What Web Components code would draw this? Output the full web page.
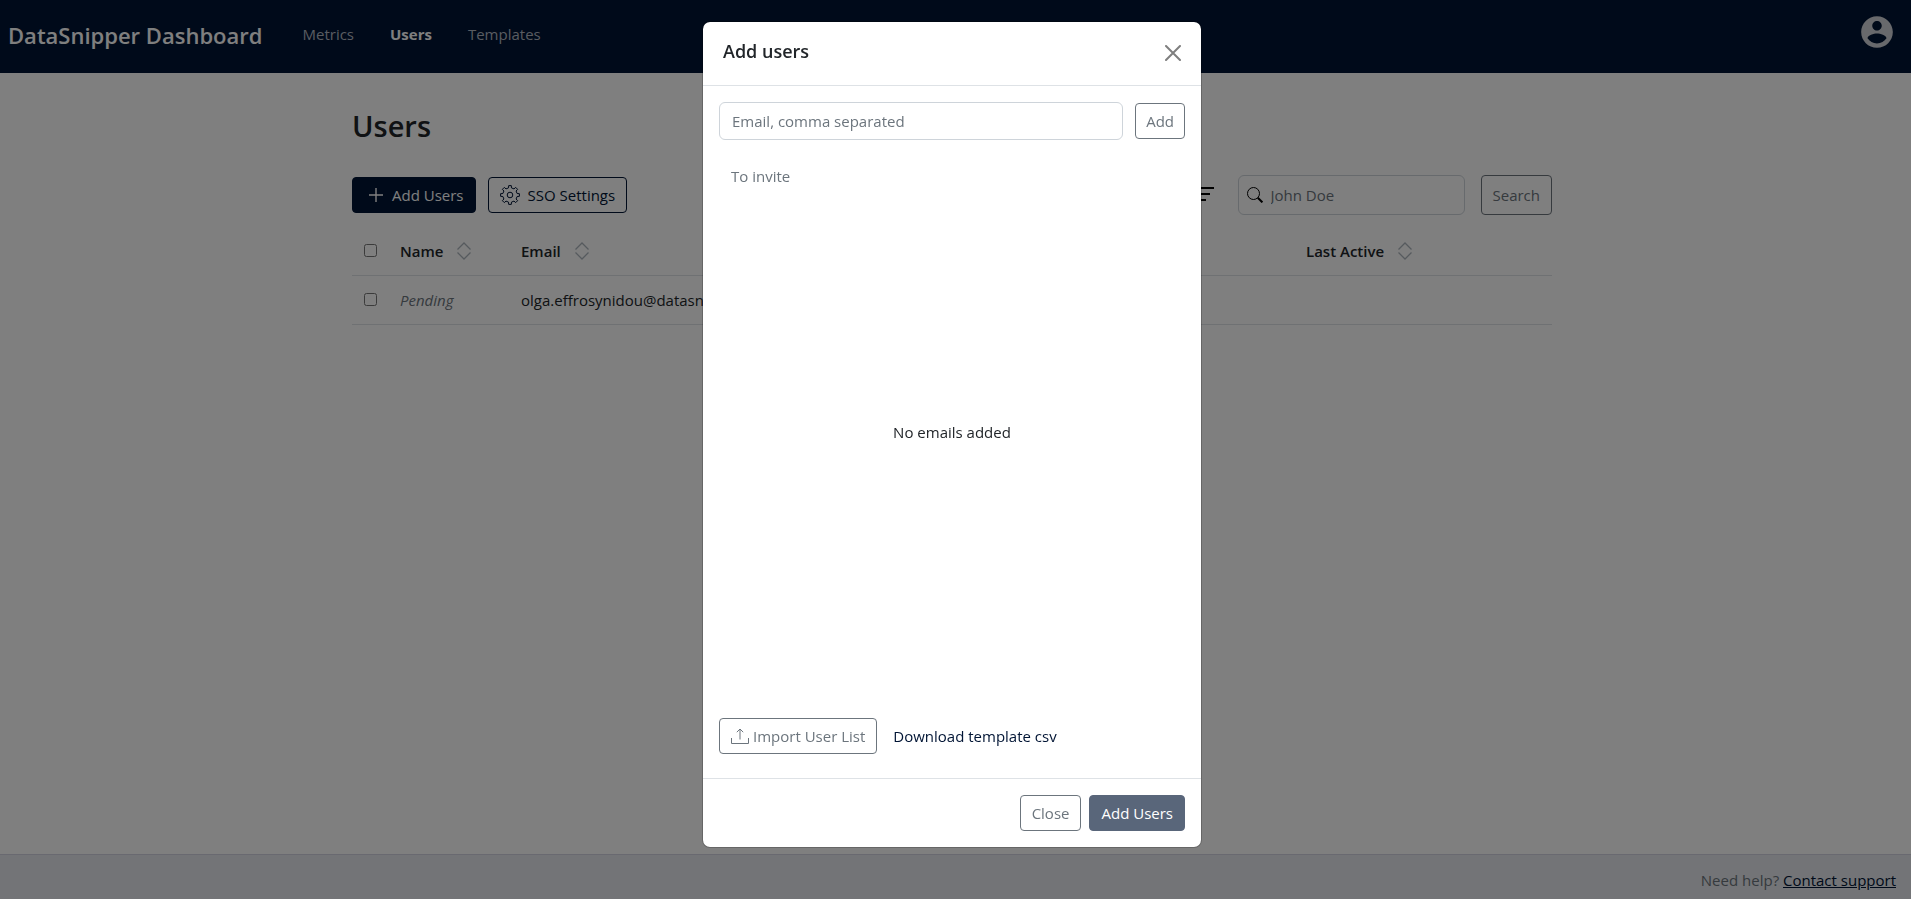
<!DOCTYPE html>
<html lang="en">
<head>
<meta charset="utf-8">
<title>DataSnipper Dashboard</title>
<style>
    html, body {
        height: 100%;
        margin: 0;
    }
    body {
        --navy: #001434;
        --muted: #6c757d;
        --line: #dee2e6;
        --gutter: 7px;
        font-family: "Open Sans", "Noto Sans", sans-serif;
        font-size: 15px;
        line-height: 24px;
        color: #212529;
        background: #fff;
    }
</style>
</head>
<body>

<app-shell>
    <app-header slot="header" brand="DataSnipper Dashboard">
        <nav-link href="#metrics">Metrics</nav-link>
        <nav-link href="#users" active>Users</nav-link>
        <nav-link href="#templates">Templates</nav-link>
    </app-header>
    <users-page>
        <span slot="title">Users</span>
    </users-page>
    <app-footer slot="footer">Need help?</app-footer>
</app-shell>
<add-users-dialog></add-users-dialog>

<script>
const ICONS = {
    account: '<svg viewBox="0 0 24 24"><path d="M12 2C6.480 2 2 6.480 2 12s4.480 10 10 10 10-4.480 10-10S17.520 2 12 2zm0 3c1.660 0 3 1.340 3 3s-1.340 3-3 3-3-1.340-3-3 1.340-3 3-3zm0 14.200c-2.500 0-4.710-1.280-6-3.220.03-1.990 4-3.080 6-3.080 1.990 0 5.970 1.090 6 3.080-1.290 1.940-3.500 3.220-6 3.220z"/></svg>',
    plus: '<svg viewBox="0 0 24 24"><path d="M11.300 5h1.400v6.300H19v1.400h-6.300V19h-1.400v-6.300H5v-1.400h6.300z"/></svg>',
    gear: '<svg viewBox="0 0 20 20" fill="none" stroke="currentColor" stroke-width="1"><circle cx="10" cy="10" r="2.800"/><path d="M8.500 2.900 8.700.600h2.600l.200 2.300 2.500 1 1.700-1.500 1.900 1.900-1.500 1.700 1 2.500 2.300.200v2.600l-2.300.200-1 2.500 1.500 1.700-1.900 1.900-1.700-1.500-2.500 1-.200 2.300H8.700l-.200-2.300-2.500-1-1.700 1.500-1.900-1.900L3.900 14l-1-2.500-2.300-.200V8.700l2.300-.200 1-2.500-1.500-1.700 1.900-1.900L6 3.900z" stroke-linejoin="round"/></svg>',
    sort: '<svg viewBox="0 0 14 18" fill="none" stroke="currentColor" stroke-width="1.300"><path d="M.500 7.500 7 1l6.500 6.500M.500 10.500 7 17l6.500-6.500"/></svg>',
    filter: '<svg viewBox="0 0 24 24"><path d="M0 5h24v2H0zM4 11h16v2H4zM8 17h8v2H8z"/></svg>',
    search: '<svg viewBox="0 0 16 16" fill="none" stroke="currentColor"><circle cx="6.500" cy="6.500" r="6"/><path d="m10.800 10.800 4.600 4.600" stroke-width="2"/></svg>',
    upload: '<svg viewBox="0 0 18 16" fill="none" stroke="currentColor"><path d="M.500 10v5.500h17V10M9 11.500V1M5.800 4.200 9 1l3.200 3.200"/></svg>',
    close: '<svg viewBox="0 0 16 16" fill="none" stroke="currentColor" stroke-width="2" stroke-linecap="round"><path d="m1 1 14 14M15 1 1 15"/></svg>'
};

/**
 * Base class: renders the subclass template into an open shadow root.
 * @extends HTMLElement
 */
class BaseElement extends HTMLElement
{
    connectedCallback()
    {
        if(this.shadowRoot) return;

        let template = document.createElement('template');
        template.innerHTML = `<style>*{box-sizing:border-box}</style>${this.render()}`;
        this.attachShadow({mode: 'open'}).appendChild(template.content.cloneNode(true));
    }

    render()
    {
        return '<slot></slot>';
    }
}


/** <ui-icon name="..." size="..."> */
class UiIcon extends BaseElement
{
    render()
    {
        let size = this.getAttribute('size') || 16;
        return `
            <style>
                :host { display: inline-flex; flex: none; }
                svg { display: block; width: ${size}px; height: ${size}px; fill: currentColor; }
                svg[fill="none"] { fill: none; }
            </style>
            ${ICONS[this.getAttribute('name')]}
        `;
    }
}
customElements.define('ui-icon', UiIcon);


/** Button. variant: primary | outline */
class UiButton extends BaseElement
{
    render()
    {
        return `
            <style>
                :host { display: inline-flex; flex: none; }
                button {
                    display: flex;
                    align-items: center;
                    gap: 8px;
                    min-height: 36px;
                    padding: 0 11px;
                    border: 1px solid var(--muted);
                    border-radius: 4px;
                    background: transparent;
                    color: var(--muted);
                    font: inherit;
                    white-space: nowrap;
                }
                :host([variant="primary"]) button {
                    background: var(--navy);
                    border-color: var(--navy);
                    color: #fff;
                }
                :host([variant="outline"]) button {
                    border-color: var(--navy);
                    color: var(--navy);
                }
                :host([tight]) button { gap: 4px; }
                :host([narrow]) button { padding: 0 10px; }
                :host([tall]) button { min-height: 40px; }
                button:disabled { opacity: .65; }
            </style>
            <button type="button" ${this.hasAttribute('disabled') ? 'disabled' : ''}><slot></slot></button>
        `;
    }
}
customElements.define('ui-button', UiButton);


class NavLink extends BaseElement
{
    render()
    {
        return `
            <style>
                :host { display: block; }
                a { color: #b2b8c2; text-decoration: none; }
                :host([active]) a { color: #fff; font-weight: 700; }
            </style>
            <a href="${this.getAttribute('href')}"><slot></slot></a>
        `;
    }
}
customElements.define('nav-link', NavLink);


class AppHeader extends BaseElement
{
    render()
    {
        return `
            <style>
                :host {
                    display: flex;
                    align-items: center;
                    height: 73px;
                    padding: 0 calc(var(--gutter) + 8px) 6px 8px;
                    box-sizing: border-box;
                    background: var(--navy);
                    color: #fff;
                }
                .brand {
                    padding-top: 2px;
                    font-size: 22px;
                    line-height: 32px;
                    font-weight: 600;
                    color: inherit;
                    text-decoration: none;
                }
                nav { display: flex; gap: 36px; margin-left: 40px; }
                button {
                    margin-left: auto;
                    padding: 0;
                    border: 0;
                    background: none;
                    color: #d0d3d8;
                }
            </style>
            <a class="brand" href="#home">${this.getAttribute('brand')}</a>
            <nav><slot></slot></nav>
            <button type="button" aria-label="Account"><ui-icon name="account" size="38"></ui-icon></button>
        `;
    }
}
customElements.define('app-header', AppHeader);


class AppFooter extends BaseElement
{
    render()
    {
        return `
            <style>
                :host {
                    display: block;
                    padding: 13px calc(var(--gutter) + 8px) 7px 8px;
                    border-top: 1px solid #d3d3e0;
                    background: #e6e9ee;
                    color: var(--muted);
                    text-align: right;
                }
                a { color: var(--navy); }
            </style>
            <slot></slot> <a href="#support">Contact support</a>
        `;
    }
}
customElements.define('app-footer', AppFooter);


class AppShell extends BaseElement
{
    render()
    {
        return `
            <style>
                :host { display: flex; flex-direction: column; min-height: 100vh; }
                main { flex: 1; padding: 32px var(--gutter) 0 0; }
            </style>
            <slot name="header"></slot>
            <main><slot></slot></main>
            <slot name="footer"></slot>
        `;
    }
}
customElements.define('app-shell', AppShell);


class SearchField extends BaseElement
{
    render()
    {
        return `
            <style>
                :host { display: flex; }
                label {
                    display: flex;
                    align-items: center;
                    gap: 8px;
                    width: 227px;
                    height: 40px;
                    padding: 0 8px;
                    border: 1px solid #ced4da;
                    border-radius: 6px;
                    color: #000;
                }
                input {
                    flex: 1;
                    min-width: 0;
                    padding: 0;
                    border: 0;
                    outline: 0;
                    background: none;
                    font: inherit;
                }
                input::placeholder { color: var(--muted); opacity: 1; }
            </style>
            <label><ui-icon name="search"></ui-icon><input type="text" aria-label="Search users" placeholder="John Doe"></label>
        `;
    }
}
customElements.define('search-field', SearchField);


class UsersTable extends BaseElement
{
    render()
    {
        return `
            <style>
                :host { display: block; }
                table { width: 100%; border-collapse: collapse; table-layout: fixed; }
                th, td {
                    height: 49px;
                    padding: 0;
                    border-bottom: 1px solid var(--line);
                    text-align: left;
                    font-weight: 400;
                    white-space: nowrap;
                }
                th { height: 48px; font-weight: 600; }
                th button {
                    display: inline-flex;
                    align-items: center;
                    gap: 12px;
                    padding: 0;
                    border: 0;
                    background: none;
                    color: inherit;
                    font: inherit;
                }
                th ui-icon { color: #adb5bd; }
                input { display: block; width: 13px; height: 13px; margin: 0 0 0 12px; }
                .check { width: 48px; }
                .name { width: 121px; }
                .active { width: 246px; }
                .pending { color: var(--muted); font-style: italic; }
            </style>
            <table>
                <thead>
                    <tr>
                        <th class="check"><input type="checkbox" aria-label="Select all"></th>
                        <th class="name"><button type="button">Name <ui-icon name="sort" size="18"></ui-icon></button></th>
                        <th><button type="button">Email <ui-icon name="sort" size="18"></ui-icon></button></th>
                        <th class="active"><button type="button">Last Active <ui-icon name="sort" size="18"></ui-icon></button></th>
                    </tr>
                </thead>
                <tbody>
                    <tr>
                        <td><input type="checkbox" aria-label="Select user"></td>
                        <td class="pending">Pending</td>
                        <td>olga.effrosynidou@datasnipper.com</td>
                        <td></td>
                    </tr>
                </tbody>
            </table>
        `;
    }
}
customElements.define('users-table', UsersTable);


class UsersPage extends BaseElement
{
    render()
    {
        return `
            <style>
                :host { display: block; max-width: 1200px; margin: 0 auto; }
                h1 { margin: 0 0 28px; font-size: 29px; line-height: 42px; font-weight: 600; }
                .toolbar { display: flex; align-items: center; gap: 12px; margin-bottom: 12px; }
                .find { display: flex; align-items: center; gap: 16px; margin-left: auto; }
                .filter { padding: 0; margin-right: 8px; border: 0; background: none; color: #000; }
            </style>
            <h1><slot name="title"></slot></h1>
            <div class="toolbar">
                <ui-button variant="primary" tight><ui-icon name="plus" size="24"></ui-icon>Add Users</ui-button>
                <ui-button variant="outline"><ui-icon name="gear" size="20"></ui-icon>SSO Settings</ui-button>
                <div class="find">
                    <button class="filter" type="button" aria-label="Filter"><ui-icon name="filter" size="24"></ui-icon></button>
                    <search-field></search-field>
                    <ui-button tall>Search</ui-button>
                </div>
            </div>
            <users-table></users-table>
        `;
    }
}
customElements.define('users-page', UsersPage);


class AddUsersDialog extends BaseElement
{
    render()
    {
        return `
            <style>
                :host {
                    display: flex;
                    align-items: flex-start;
                    justify-content: center;
                    position: fixed;
                    inset: 0;
                    padding: 21px var(--gutter) 0 0;
                    overflow: auto;
                    background: rgba(0, 0, 0, .5);
                    box-sizing: border-box;
                }
                dialog {
                    position: static;
                    width: 500px;
                    margin: 0;
                    padding: 0;
                    border: 1px solid rgba(0, 0, 0, .2);
                    border-radius: 8px;
                    background: #fff;
                    background-clip: padding-box;
                    color: inherit;
                }
                header {
                    display: flex;
                    align-items: center;
                    justify-content: space-between;
                    height: 64px;
                    padding: 0 20px;
                    border-bottom: 1px solid var(--line);
                }
                h2 { margin: 0; padding-bottom: 6px; font-size: 18px; line-height: 28px; font-weight: 600; }
                .close { padding: 2px 0 0; border: 0; background: none; color: #7f7f7f; }
                .body { padding: 16px 16px 24px; }
                .row { display: flex; align-items: center; gap: 12px; }
                .row input {
                    flex: 1;
                    min-width: 0;
                    height: 38px;
                    padding: 0 12px;
                    border: 1px solid #ced4da;
                    border-radius: 6px;
                    font: inherit;
                }
                .row input::placeholder { color: var(--muted); opacity: 1; }
                .label { margin: 24px 12px 0; color: var(--muted); }
                .list {
                    display: flex;
                    align-items: center;
                    justify-content: center;
                    height: 488px;
                    margin-bottom: 42px;
                }
                .import { gap: 16px; }
                .import a { color: var(--navy); text-decoration: none; }
                footer {
                    display: flex;
                    justify-content: flex-end;
                    gap: 8px;
                    padding: 16px;
                    border-top: 1px solid var(--line);
                }
            </style>
            <dialog open aria-labelledby="title">
                <header>
                    <h2 id="title">Add users</h2>
                    <button class="close" type="button" aria-label="Close dialog"><ui-icon name="close"></ui-icon></button>
                </header>
                <div class="body">
                    <div class="row">
                        <input type="text" aria-label="Emails" placeholder="Email, comma separated">
                        <ui-button narrow>Add</ui-button>
                    </div>
                    <div class="label">To invite</div>
                    <div class="list">No emails added</div>
                    <div class="row import">
                        <ui-button tight><ui-icon name="upload" size="18"></ui-icon>Import User List</ui-button>
                        <a href="#template">Download template csv</a>
                    </div>
                </div>
                <footer>
                    <ui-button>Close</ui-button>
                    <ui-button variant="primary" disabled>Add Users</ui-button>
                </footer>
            </dialog>
        `;
    }
}
customElements.define('add-users-dialog', AddUsersDialog);
</script>
</body>
</html>
